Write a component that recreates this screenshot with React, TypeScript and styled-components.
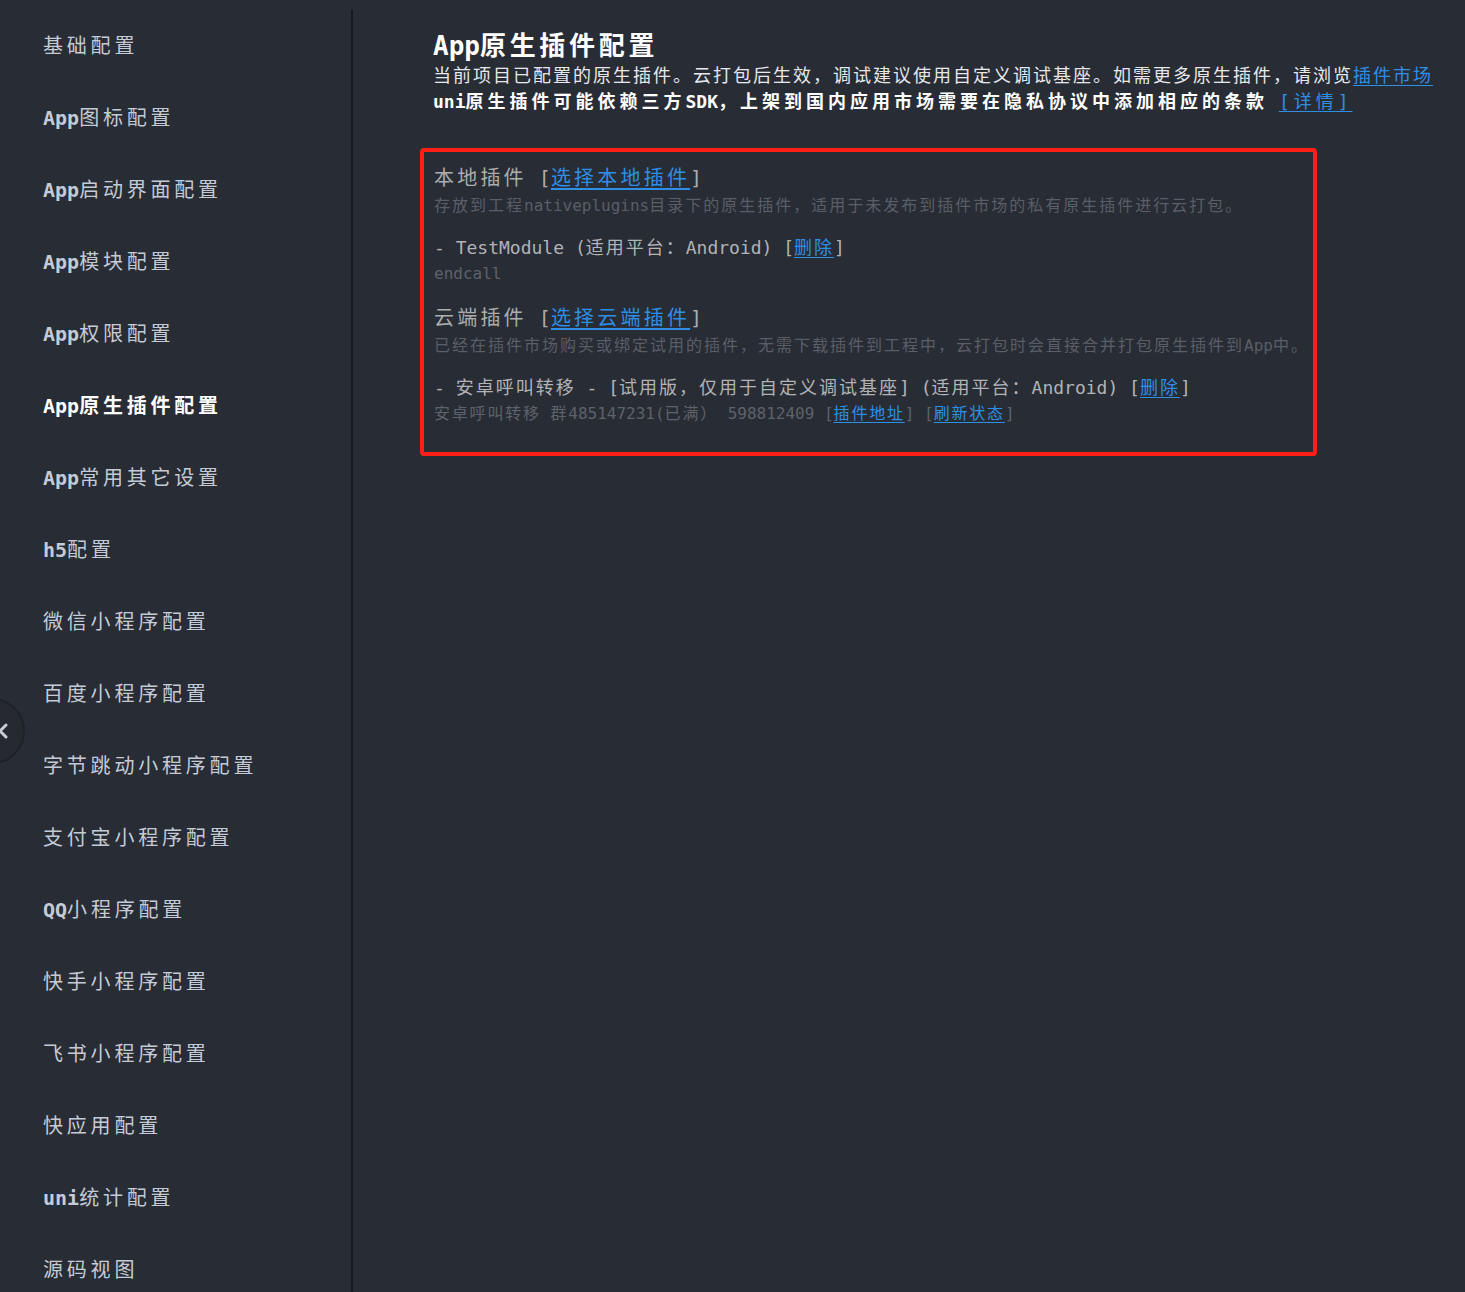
import React, { Fragment } from "react";
import styled, { createGlobalStyle } from "styled-components";

const GlobalStyle = createGlobalStyle`
  html, body {
    margin: 0;
    padding: 0;
    overflow: hidden;
    background: #282c35;
  }
  * {
    box-sizing: border-box;
  }
`;

const FONT = `"DejaVu Sans Mono", "Noto Sans CJK SC", monospace`;

// latin runs keep the plain mono advance, only CJK gets the extra spacing
const Lat = styled.span`
  letter-spacing: 0;
`;

const mix = (text: string) =>
  text
    .split(/([\x00-\x7f]+)/)
    .filter(Boolean)
    .map((part, i) =>
      /^[\x00-\x7f]+$/.test(part) ? (
        <Lat key={i}>{part}</Lat>
      ) : (
        <Fragment key={i}>{part}</Fragment>
      )
    );

const Page = styled.div`
  position: relative;
  display: flex;
  height: 1292px;
  overflow: hidden;
  background: #282c35;
  font-family: ${FONT};
`;

const Sidebar = styled.nav`
  width: 353px;
  height: 1282px;
  margin-top: 10px;
  padding-left: 43px;
  border-right: 2px solid #17191d;
  overflow: hidden;
  flex-shrink: 0;
`;

const NavItem = styled.div<{ $active?: boolean }>`
  height: 72px;
  display: flex;
  align-items: center;
  font-size: 20px;
  line-height: 1;
  letter-spacing: 3.8px;
  white-space: nowrap;
  color: ${(p) => (p.$active ? "#ffffff" : "#c4cbd6")};
  font-weight: ${(p) => (p.$active ? 700 : 400)};

  ${Lat} {
    font-weight: 700;
  }
`;

const CollapseButton = styled.div`
  position: absolute;
  left: -41px;
  top: 698px;
  width: 66px;
  height: 66px;
  border-radius: 50%;
  background: #262930;
  border: 2px solid #1f2127;
  display: flex;
  align-items: center;
  justify-content: flex-end;
  padding-right: 15px;
`;

const Main = styled.main`
  flex: 1;
  padding: 29px 0 0 80px;
  color: #e6e8ec;
`;

const Title = styled.h1`
  margin: 0;
  font-size: 26px;
  line-height: 34px;
  font-weight: 700;
  letter-spacing: 3.7px;
  color: #ffffff;
`;

const Intro = styled.p<{ $bold?: boolean }>`
  margin: 0;
  font-size: 18px;
  line-height: 26px;
  white-space: nowrap;
  letter-spacing: ${(p) => (p.$bold ? "4px" : "2px")};
  font-weight: ${(p) => (p.$bold ? 700 : 400)};
  color: ${(p) => (p.$bold ? "#ffffff" : "#e6e8ec")};
`;

const Link = styled.a`
  color: #2f8fe4;
  font-weight: 400;
  text-decoration: underline;
  text-underline-offset: 3px;
  cursor: pointer;
`;

const PluginBox = styled.section`
  margin: 33px 0 0 -13px;
  width: 897px;
  border: 4px solid #ff1f14;
  border-radius: 4px;
  padding: 12px 10px 25px;
`;

const Group = styled.div`
  & + & {
    margin-top: 17px;
  }
`;

const GroupTitle = styled.div`
  font-size: 20px;
  line-height: 28px;
  letter-spacing: 3.2px;
  color: #acadaf;
  white-space: nowrap;
`;

const GroupDesc = styled.div`
  font-size: 16px;
  line-height: 28px;
  letter-spacing: 2px;
  color: #5a5e67;
  white-space: nowrap;
`;

const PluginLine = styled.div`
  margin-top: 15px;
  font-size: 18px;
  line-height: 26px;
  letter-spacing: 2px;
  color: #b2b3b5;
  white-space: nowrap;
`;

const PluginMeta = styled.div`
  font-size: 16px;
  line-height: 26px;
  letter-spacing: 1.8px;
  color: #5e626a;
  white-space: nowrap;
`;

const navItems = [
  "基础配置",
  "App图标配置",
  "App启动界面配置",
  "App模块配置",
  "App权限配置",
  "App原生插件配置",
  "App常用其它设置",
  "h5配置",
  "微信小程序配置",
  "百度小程序配置",
  "字节跳动小程序配置",
  "支付宝小程序配置",
  "QQ小程序配置",
  "快手小程序配置",
  "飞书小程序配置",
  "快应用配置",
  "uni统计配置",
  "源码视图",
];

const App: React.FC = () => {
  return (
    <Fragment>
      <GlobalStyle />
      <Page>
        <Sidebar>
          {navItems.map((label) => (
            <NavItem key={label} $active={label === "App原生插件配置"}>
              {mix(label)}
            </NavItem>
          ))}
        </Sidebar>
        <CollapseButton>
          <svg width="10" height="16" viewBox="0 0 10 16">
            <polyline
              points="8,2 2,8 8,14"
              fill="none"
              stroke="#c9ced7"
              strokeWidth="3"
              strokeLinecap="round"
              strokeLinejoin="round"
            />
          </svg>
        </CollapseButton>
        <Main>
          <Title>{mix("App原生插件配置")}</Title>
          <Intro>
            当前项目已配置的原生插件。云打包后生效，调试建议使用自定义调试基座。如需更多原生插件，请浏览
            <Link>插件市场</Link>
          </Intro>
          <Intro $bold>
            {mix("uni原生插件可能依赖三方SDK，上架到国内应用市场需要在隐私协议中添加相应的条款 ")}
            <Link>[详情]</Link>
          </Intro>

          <PluginBox>
            <Group>
              <GroupTitle>
                {mix("本地插件 [")}
                <Link>选择本地插件</Link>
                {mix("]")}
              </GroupTitle>
              <GroupDesc>
                {mix("存放到工程nativeplugins目录下的原生插件，适用于未发布到插件市场的私有原生插件进行云打包。")}
              </GroupDesc>
              <PluginLine>
                {mix("- TestModule (适用平台：Android) [")}
                <Link>删除</Link>
                {mix("]")}
              </PluginLine>
              <PluginMeta>{mix("endcall")}</PluginMeta>
            </Group>

            <Group>
              <GroupTitle>
                {mix("云端插件 [")}
                <Link>选择云端插件</Link>
                {mix("]")}
              </GroupTitle>
              <GroupDesc>
                {mix("已经在插件市场购买或绑定试用的插件，无需下载插件到工程中，云打包时会直接合并打包原生插件到App中。")}
              </GroupDesc>
              <PluginLine>
                {mix("- 安卓呼叫转移 - [试用版，仅用于自定义调试基座] (适用平台：Android) [")}
                <Link>删除</Link>
                {mix("]")}
              </PluginLine>
              <PluginMeta>
                {mix("安卓呼叫转移 群485147231(已满） 598812409 [")}
                <Link>插件地址</Link>
                {mix("] [")}
                <Link>刷新状态</Link>
                {mix("]")}
              </PluginMeta>
            </Group>
          </PluginBox>
        </Main>
      </Page>
    </Fragment>
  );
};

export default App;
